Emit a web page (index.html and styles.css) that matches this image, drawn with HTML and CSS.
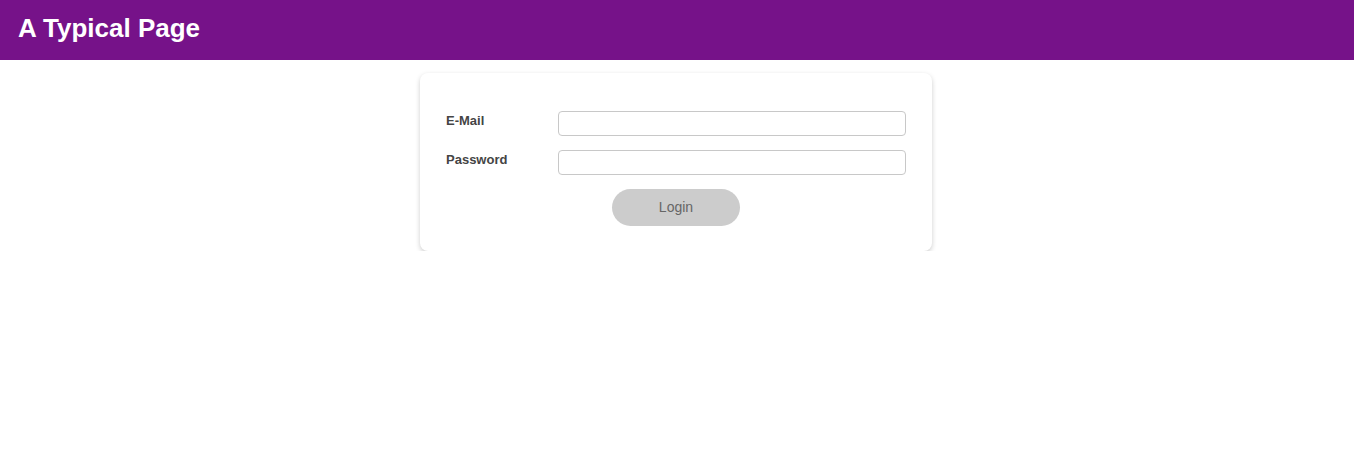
FILE: index.html
```html
<!DOCTYPE html>
<html>
<head>
  <meta charset="UTF-8">
  <meta name="viewport" content="width=device-width, initial-scale=1.0">
  <title>A Typical Page</title>
  <link rel="stylesheet" href="styles.css">
</head>
<body>
  <div class="header">A Typical Page</div>

  <div class="main">
    <form class="login-card" onsubmit="return false">
      <div class="fields">
        <label for="email">E-Mail</label>
        <input id="email" type="text">
        <label for="password">Password</label>
        <input id="password" type="password">
      </div>
      <div class="actions">
        <button type="submit" class="login-btn">Login</button>
      </div>
    </form>
  </div>
</body>
</html>
```

FILE: styles.css
```css
body { font-family: "Liberation Sans", Arial, sans-serif; margin: 0; padding: 0; background-color: #fff; }
.header {
  background-color: #761289;
  color: white;
  height: 60px;
  box-sizing: border-box;
  padding: 13px 18px 0;
  font-size: 26px;
  font-weight: bold;
}
.main {
  display: flex;
  justify-content: center;
  padding: 13px 2px 0 0;
}
.login-card {
  width: 512px;
  box-sizing: border-box;
  padding: 38px 26px 25px;
  background: #fff;
  border-radius: 8px;
  box-shadow: 0 2px 5px rgba(0, 0, 0, 0.2);
}
.fields {
  display: grid;
  grid-template-columns: 112px 1fr;
  row-gap: 14px;
  align-items: start;
}
.fields label {
  font-size: 13px;
  font-weight: bold;
  color: #444;
  padding-top: 2px;
}
.fields input {
  height: 25px;
  box-sizing: border-box;
  border: 1px solid #c8c8c8;
  border-radius: 4px;
  padding: 2px 6px;
  font-size: 13px;
  font-family: inherit;
}
.actions {
  display: flex;
  justify-content: center;
  margin-top: 14px;
}
.login-btn {
  width: 128px;
  height: 37px;
  padding: 0 0 2px;
  border: none;
  border-radius: 19px;
  background-color: #ccc;
  color: #666;
  font-size: 14px;
  font-family: inherit;
}
```
